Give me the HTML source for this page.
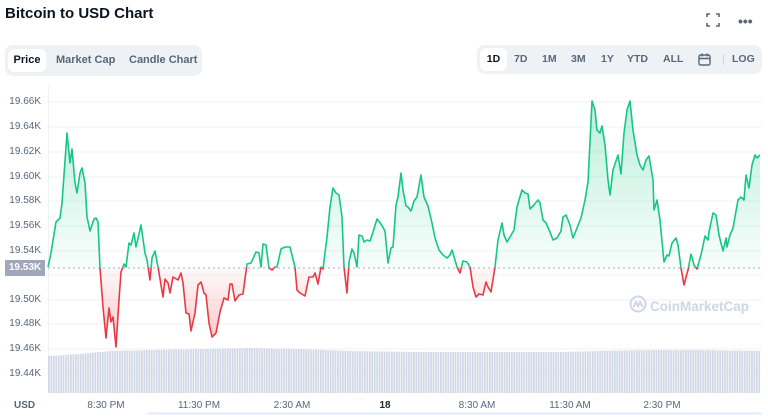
<!DOCTYPE html>
<html><head><meta charset="utf-8"><style>
*{margin:0;padding:0;box-sizing:border-box}
body{width:768px;height:417px;background:#fff;font-family:"Liberation Sans",sans-serif;position:relative;overflow:hidden;color:#222531}
.title{position:absolute;left:5px;top:5px;font-size:15px;font-weight:bold;color:#0d1421}
.grp{position:absolute;background:#eff2f5;border-radius:8px}
.tab{position:absolute;font-size:11px;font-weight:bold;color:#58667e;top:0;line-height:31px}
.act{background:#fff;border-radius:6px;color:#0d1421}
.yl{position:absolute;left:0;width:41px;text-align:right;font-size:10px;color:#58667e}
.xl{position:absolute;top:400px;font-size:10px;color:#58667e;transform:translateX(-50%)}
</style></head><body>
<div class="title">Bitcoin to USD Chart</div>
<svg style="position:absolute;left:706px;top:13px" width="14" height="14" viewBox="0 0 14 14" fill="none" stroke="#58667e" stroke-width="1.6"><path d="M1 4V1h3M10 1h3v3M13 10v3h-3M4 13H1v-3"/></svg>
<div style="position:absolute;left:738px;top:13px;font-size:14px;font-weight:bold;color:#58667e;letter-spacing:0px">•••</div>
<div class="grp" style="left:5px;top:45px;width:197px;height:31px">
<div class="tab act" style="left:3px;top:4px;width:38px;height:23px;line-height:23px;text-align:center">Price</div>
<div class="tab" style="left:51px">Market Cap</div>
<div class="tab" style="left:124px">Candle Chart</div>
</div>
<div class="grp" style="left:477px;top:45px;width:285px;height:29px">
<div class="tab act" style="left:3px;top:3px;width:27px;height:23px;line-height:23px;text-align:center;font-size:10.5px">1D</div>
<div class="tab" style="left:37px;line-height:29px;font-size:10.5px">7D</div>
<div class="tab" style="left:65px;line-height:29px;font-size:10.5px">1M</div>
<div class="tab" style="left:94px;line-height:29px;font-size:10.5px">3M</div>
<div class="tab" style="left:124px;line-height:29px;font-size:10.5px">1Y</div>
<div class="tab" style="left:150px;line-height:29px;font-size:10.5px">YTD</div>
<div class="tab" style="left:186px;line-height:29px;font-size:10.5px">ALL</div>
<svg style="position:absolute;left:221px;top:8px" width="13" height="13" viewBox="0 0 13 13" fill="none" stroke="#58667e" stroke-width="1.4"><rect x="1" y="2" width="11" height="10" rx="1.5"/><path d="M1 5.5h11M4 0.5v3M9 0.5v3"/></svg>
<div style="position:absolute;left:246px;top:9px;width:1px;height:11px;background:#cfd6e4"></div>
<div class="tab" style="left:255px;line-height:29px;font-size:10.5px">LOG</div>
</div>

<svg style="position:absolute;left:0;top:0" width="768" height="417">
<defs>
<linearGradient id="gg" x1="0" y1="95" x2="0" y2="268" gradientUnits="userSpaceOnUse"><stop offset="0" stop-color="#16c784" stop-opacity="0.3"/><stop offset="1" stop-color="#16c784" stop-opacity="0.03"/></linearGradient>
<linearGradient id="rg" x1="0" y1="268" x2="0" y2="350" gradientUnits="userSpaceOnUse"><stop offset="0" stop-color="#ea3943" stop-opacity="0.03"/><stop offset="1" stop-color="#ea3943" stop-opacity="0.3"/></linearGradient>
<clipPath id="up"><rect x="0" y="0" width="768" height="268"/></clipPath>
<clipPath id="dn"><rect x="0" y="268" width="768" height="150"/></clipPath>
<pattern id="bars" x="48" y="0" width="2.45" height="10" patternUnits="userSpaceOnUse"><rect width="1.7" height="10" fill="#cfd6e4"/></pattern>
</defs>
<g stroke="#eff2f5" stroke-width="1">
<line x1="48" x2="762" y1="102" y2="102"/><line x1="48" x2="762" y1="127" y2="127"/><line x1="48" x2="762" y1="152" y2="152"/><line x1="48" x2="762" y1="177" y2="177"/><line x1="48" x2="762" y1="201" y2="201"/><line x1="48" x2="762" y1="226" y2="226"/><line x1="48" x2="762" y1="251" y2="251"/><line x1="48" x2="762" y1="275" y2="275"/><line x1="48" x2="762" y1="300" y2="300"/><line x1="48" x2="762" y1="324" y2="324"/><line x1="48" x2="762" y1="349" y2="349"/><line x1="48" x2="762" y1="374" y2="374"/>
<line x1="48.5" x2="48.5" y1="86" y2="393"/>
</g>
<polygon fill="url(#bars)" points="48,356 80,354 110,351 150,350 200,349 250,348 300,349 350,351 420,352 500,352 560,352 600,351 650,350 700,350 760,351 760,393 48,393"/>
<line x1="48" x2="762" y1="268" y2="268" stroke="#a6b0c3" stroke-width="1" stroke-dasharray="2,3"/>
<g id="c">
<polygon id="ar" clip-path="url(#up)" fill="url(#gg)" points=""/>
</g>
<g fill="none" stroke-width="1.6" stroke-linejoin="round">
<polyline id="l1" clip-path="url(#up)" stroke="#16c784" points=""/>
<polyline id="l2" clip-path="url(#dn)" stroke="#ea3943" points=""/>
</g>
<polygon id="ar2" clip-path="url(#dn)" fill="url(#rg)" points=""/>
<g transform="translate(630,296)" fill="none" stroke="#cfd6e4" stroke-width="2"><circle cx="8" cy="8" r="7.5"/><path d="M3.5 11l2.5-5 2 4 2-4 2.5 5"/></g>
<text x="650" y="311" font-family="Liberation Sans" font-size="13.5" font-weight="bold" fill="#cfd6e4">CoinMarketCap</text>
<line x1="148" x2="762" y1="413.5" y2="413.5" stroke="#e3ebff" stroke-width="2"/>
</svg>
<div class="yl" style="top:96px">19.66K</div><div class="yl" style="top:121px">19.64K</div><div class="yl" style="top:146px">19.62K</div><div class="yl" style="top:171px">19.60K</div><div class="yl" style="top:195px">19.58K</div><div class="yl" style="top:220px">19.56K</div><div class="yl" style="top:245px">19.54K</div><div class="yl" style="top:294px">19.50K</div><div class="yl" style="top:318px">19.48K</div><div class="yl" style="top:343px">19.46K</div><div class="yl" style="top:368px">19.44K</div>
<div style="position:absolute;left:5px;top:260px;width:40px;height:16px;background:#a1a7bb;color:#fff;font-size:10px;font-weight:bold;line-height:16px;text-align:center">19.53K</div>
<div style="position:absolute;left:14px;top:400px;font-size:10px;font-weight:bold;color:#58667e">USD</div>
<div class="xl" style="left:106px">8:30 PM</div><div class="xl" style="left:199px">11:30 PM</div><div class="xl" style="left:292px">2:30 AM</div><div class="xl" style="left:385px;font-weight:bold;color:#222531">18</div><div class="xl" style="left:477px">8:30 AM</div><div class="xl" style="left:570px">11:30 AM</div><div class="xl" style="left:662px">2:30 PM</div>
<script>
var p="48,267 51,253 56,222 60,218 62,203 67,133 70,163 72,149 75,183 77,193 80,173 82,168 85,183 87,217 90,231 94,219 96,218 98,222 100,268 103,307 106,338 109,308 111,322 113,317 116,347 119,300 121,272 124,264 126,267 129,243 131,245 134,233 136,247 141,225 145,253 147,260 150,280 152,258 155,251 158,267 163,297 165,279 168,283 170,293 173,277 178,280 181,273 183,283 186,313 189,314 191,331 195,313 198,285 201,282 204,293 206,295 209,323 212,337 216,333 220,312 224,298 228,300 230,284 232,284 235,301 239,295 243,294 247,264 251,263 256,252 259,253 261,267 263,244 266,245 269,268 272,270 275,267 277,267 281,249 285,247 290,247 295,267 297,290 300,293 305,296 309,277 313,277 315,273 318,284 321,267 323,269 327,237 330,207 333,188 336,193 339,195 342,217 344,267 347,293 349,262 352,249 354,253 357,267 359,235 362,236 364,242 367,240 370,241 373,232 377,219 381,224 385,231 388,263 391,248 393,247 396,205 398,197 401,173 403,190 406,206 408,207 411,211 414,201 417,197 421,175 424,197 428,206 432,223 435,238 439,250 443,255 447,258 450,255 452,250 455,260 457,267 460,273 463,261 467,262 470,267 473,287 476,297 479,294 483,295 486,282 488,287 491,292 495,267 498,240 502,223 504,235 507,242 510,237 514,230 517,207 522,190 525,193 528,194 530,209 533,206 538,200 540,203 543,220 546,223 550,232 553,240 557,238 561,231 563,217 566,215 570,225 573,238 577,228 581,218 585,200 588,182 592,101 595,110 597,130 600,133 602,126 605,145 608,180 610,195 613,170 618,155 621,174 624,133 627,110 630,101 633,130 637,155 640,165 643,170 646,160 649,156 653,180 654,210 657,200 660,220 664,262 667,255 669,256 672,243 676,238 678,245 681,268 684,285 688,270 691,254 694,265 697,269 701,255 705,236 708,240 709,232 713,213 716,215 719,235 723,251 726,238 727,247 730,235 733,228 738,200 741,197 744,200 746,175 749,188 752,165 755,155 757,158 760,155";
document.getElementById('l1').setAttribute('points',p);
document.getElementById('l2').setAttribute('points',p);
var a="48,268 "+p+" 760,268";
document.getElementById('ar').setAttribute('points',a);
document.getElementById('ar2').setAttribute('points',a);
</script>
</body></html>
